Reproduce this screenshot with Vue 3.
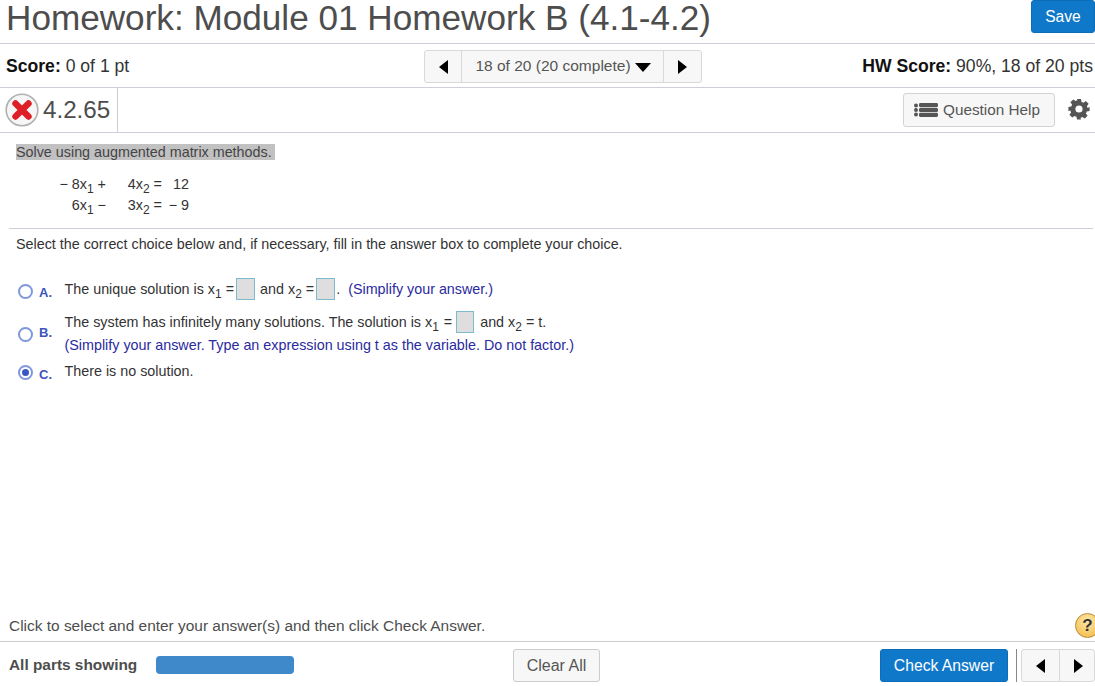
<script setup>
const eqs = [
  ['− 8x', '1', ' +', '4x', '2', ' =', '12'],
  ['6x', '1', ' −', '3x', '2', ' =', '− 9'],
]
</script>

<template>
  <div class="page">
    <header class="title-row">
      <h1 class="title">Homework: Module 01 Homework B (4.1-4.2)</h1>
      <button class="btn primary save">Save</button>
    </header>

    <div class="score-row">
      <div class="score"><b>Score:</b> 0 of 1 pt</div>
      <div class="pager">
        <span class="pager-arrow"><i class="tri left"></i></span>
        <span class="pager-mid">18 of 20 (20 complete)<i class="tri down"></i></span>
        <span class="pager-arrow last"><i class="tri right"></i></span>
      </div>
      <div class="score hw"><b>HW Score:</b> 90%, 18 of 20 pts</div>
    </div>

    <div class="q-row">
      <div class="q-id">
        <svg class="x-icon" width="34" height="34" viewBox="0 0 34 34">
          <circle cx="17" cy="17" r="15.8" fill="#f6f6f6" stroke="#b0b0b0" stroke-width="1.6" />
          <path d="M10.5 10.5 L23.5 23.5 M23.5 10.5 L10.5 23.5" stroke="#df1f26" stroke-width="6.4" stroke-linecap="round" />
        </svg>
        <span class="q-num">4.2.65</span>
      </div>
      <div class="q-tools">
        <button class="help">
          <svg width="24" height="14" viewBox="0 0 24 14" fill="#555">
            <circle cx="2" cy="2.4" r="2" /><circle cx="2" cy="7" r="2" /><circle cx="2" cy="11.6" r="2" />
            <rect x="5" y="0" width="19" height="4.2" rx="1.4" /><rect x="5" y="4.9" width="19" height="4.2" rx="1.4" /><rect x="5" y="9.8" width="19" height="4.2" rx="1.4" />
          </svg>
          Question Help
        </button>
        <svg class="gear" width="22" height="22" viewBox="0 0 22 22" fill="#555">
          <path fill-rule="evenodd" d="M9 1 h4 l.5 2.9 a7.4 7.4 0 0 1 1.9.8 l2.4-1.7 2.8 2.8-1.7 2.4 a7.4 7.4 0 0 1 .8 1.9 L21.6 9 v4 l-2.9.5 a7.4 7.4 0 0 1-.8 1.9 l1.7 2.4-2.8 2.8-2.4-1.7 a7.4 7.4 0 0 1-1.9.8 L13 21.6 H9 l-.5-2.9 a7.4 7.4 0 0 1-1.9-.8 l-2.4 1.7-2.8-2.8 1.7-2.4 a7.4 7.4 0 0 1-.8-1.9 L.4 13 V9 l2.9-.5 a7.4 7.4 0 0 1 .8-1.9 L2.4 4.2 5.2 1.4 l2.4 1.7 a7.4 7.4 0 0 1 1.9-.8 Z M11 7.4 a3.6 3.6 0 1 0 0 7.2 a3.6 3.6 0 0 0 0-7.2 Z" />
        </svg>
      </div>
    </div>

    <main class="content">
      <div class="question">
        <div class="prompt"><span class="hl">Solve using augmented matrix methods.</span></div>
        <div class="eqs">
          <template v-for="(e, i) in eqs" :key="i">
            <span class="c1">{{ e[0] }}<sub>{{ e[1] }}</sub>{{ e[2] }}</span>
            <span class="c2">{{ e[3] }}<sub>{{ e[4] }}</sub>{{ e[5] }}</span>
            <span class="c3">{{ e[6] }}</span>
          </template>
        </div>
      </div>
      <div class="answer">
        <p class="instr">Select the correct choice below and, if necessary, fill in the answer box to complete your choice.</p>

        <div class="opt opt-a">
          <span class="radio"></span><span class="letter">A.</span>
          <div class="opt-text">
            <div>The unique solution is x<sub>1</sub> = <span class="box"></span> and x<sub>2</sub> = <span class="box"></span>. <span class="hint first">(Simplify your answer.)</span></div>
          </div>
        </div>
        <div class="opt opt-b">
          <span class="radio"></span><span class="letter">B.</span>
          <div class="opt-text">
            <div>The system has infinitely many solutions. The solution is x<sub class="wide">1</sub> = <span class="box narrow"></span> and x<sub>2</sub> = t.</div>
            <div class="hint second">(Simplify your answer. Type an expression using t as the variable. Do not factor.)</div>
          </div>
        </div>
        <div class="opt opt-c">
          <span class="radio on"></span><span class="letter">C.</span>
          <div class="opt-text"><div>There is no solution.</div></div>
        </div>
      </div>
    </main>

    <div class="status">
      <span>Click to select and enter your answer(s) and then click Check Answer.</span>
      <span class="qmark">?</span>
    </div>

    <footer class="foot">
      <div class="parts">
        <b>All parts showing</b>
        <span class="bar"></span>
      </div>
      <button class="btn clear">Clear All</button>
      <div class="foot-right">
        <button class="btn primary check">Check Answer</button>
        <span class="sep"></span>
        <div class="mini">
          <span><i class="tri left"></i></span>
          <span><i class="tri right"></i></span>
        </div>
      </div>
    </footer>
  </div>
</template>

<style>
html, body { margin: 0; background: #fff; overflow: hidden; }
</style>

<style scoped>
.page { width: 1095px; height: 686px; overflow: hidden; display: flex; flex-direction: column; font-family: "Liberation Sans", Arial, sans-serif; color: #333; background: #fff; }
.title-row { height: 43px; flex: none; box-sizing: content-box; display: flex; justify-content: space-between; align-items: flex-start; border-bottom: 1px solid #ccced8; padding-left: 6px; }
.title { margin: 0; font-size: 35.15px; line-height: 36px; font-weight: 400; color: #4d4d4d; white-space: nowrap; }
.btn { font-family: inherit; box-sizing: border-box; border-radius: 3px; cursor: pointer; }
.primary { background: #0f78c9; border: 1px solid #0c6db8; color: #fff; }
.save { width: 64px; height: 33px; margin-top: 0; font-size: 15.6px; font-weight: 400; padding: 0; }
.score-row { height: 43px; box-sizing: border-box; flex: none; display: flex; align-items: center; justify-content: space-between; padding: 1px 2px 0 6px; position: relative; font-size: 17.6px; }
.score { color: #333; white-space: nowrap; }
.score b { color: #111; }
.pager { position: absolute; left: 424px; top: 6px; height: 33px; width: 278px; box-sizing: border-box; border: 1px solid #d9d9d9; border-radius: 3px; background: #f7f7f7; display: flex; }
.pager-arrow { width: 36px; flex: none; display: flex; align-items: center; justify-content: center; }
.pager-arrow.last { width: 37px; }
.pager-mid { flex: 1; border-left: 1px solid #d9d9d9; border-right: 1px solid #d9d9d9; display: flex; align-items: center; justify-content: center; font-size: 15.5px; color: #555; white-space: nowrap; padding-bottom: 1px; box-sizing: border-box; }
.tri { display: block; width: 0; height: 0; border-style: solid; border-color: transparent; }
.tri.left { border-width: 7px 9px 7px 0; border-right-color: #000; }
.tri.right { border-width: 7px 0 7px 9px; border-left-color: #000; }
.tri.down { border-width: 9px 8px 0; border-top-color: #000; margin-left: 4px; margin-right: -1px; margin-top: 2px; }
.q-row { height: 46px; box-sizing: border-box; flex: none; display: flex; justify-content: space-between; border-top: 1px solid #ccced8; border-bottom: 1px solid #ccced8; }
.q-id { display: flex; align-items: center; width: 112px; height: 44px; border-right: 1px solid #ccced8; padding-left: 5px; box-sizing: content-box; gap: 4px; }
.x-icon { flex: none; }
.q-num { font-size: 24.2px; color: #4d4d4d; }
.q-tools { display: flex; align-items: flex-start; padding: 5px 5px 0 0; }
.help { width: 152px; height: 34px; box-sizing: border-box; border: 1px solid #d3d3d3; border-radius: 3px; background: #f7f7f7; color: #555; font-family: inherit; font-size: 15.3px; display: flex; align-items: center; gap: 5px; padding: 0 0 0 10px; margin-right: 13px; }
.gear { margin-top: 5px; }
.content { flex: 1; min-height: 0; padding: 0 2px 0 9px; font-size: 14.33px; color: #333; }
.question { padding: 11px 0 0 7px; border-bottom: 1px solid #ccced8; box-sizing: border-box; height: 96px; }
.prompt { line-height: 16px; }
.hl { background: #c1c1c1; padding-right: 3px; color: #444; }
.eqs { display: grid; grid-template-columns: 90px 56px 27px; grid-auto-rows: 21px; margin-top: 16px; width: max-content; }
.c1 { text-align: right; white-space: nowrap; }
.c2 { text-align: right; white-space: nowrap; }
.c3 { text-align: right; white-space: nowrap; }
sub { font-size: 12px; line-height: 0; vertical-align: -4px; }
sub.wide { margin-right: 1px; }
.answer { padding-left: 7px; }
.instr { margin: 0; padding-top: 7px; line-height: 16px; }
.opt { display: flex; position: relative; align-items: flex-start; }
.opt-a { margin-top: 26px; height: 33px; }
.opt-b { height: 49px; }
.opt-c { height: 20px; }
.radio { position: absolute; left: 2px; width: 15px; height: 15px; box-sizing: border-box; border: 2px solid #7f98dd; border-radius: 50%; background: #fff; }
.opt-a .radio { top: 6px; }
.opt-b .radio { top: 16px; }
.opt-c .radio { top: 5px; }
.radio.on::after { content: ""; position: absolute; left: 2px; top: 2px; width: 7px; height: 7px; border-radius: 50%; background: #3a57c4; }
.letter { position: absolute; left: 23px; font-weight: 700; font-size: 13px; color: #3d55bd; }
.opt-a .letter { top: 7px; }
.opt-b .letter { top: 14px; }
.opt-c .letter { top: 7px; }
.opt-text { margin-left: 48.5px; line-height: 23px; white-space: nowrap; }
.hint { color: #2a2aa0; }
.hint.first { margin-left: 4px; }
.box { display: inline-block; vertical-align: -6px; width: 19px; height: 22px; box-sizing: border-box; border: 1px solid #7fbad0; background: #dedede; margin: 0 1px 0 -2px; }
.box.narrow { width: 18px; margin: 0 2px 0 0; }
.status { flex: none; display: flex; justify-content: space-between; align-items: center; padding: 0 0 2px 9px; box-sizing: border-box; border-bottom: 1px solid #ccc; font-size: 15.45px; color: #4d4d4d; position: relative; height: 30px; }
.qmark { position: absolute; left: 1075px; top: 1px; width: 25px; height: 25px; box-sizing: border-box; border-radius: 50%; background: radial-gradient(circle at 50% 30%, #fde9a8, #f2b642); border: 1px solid #b98a35; color: #333; font-weight: 700; font-size: 17px; line-height: 23px; text-align: center; }
.foot { height: 44px; flex: none; display: flex; align-items: center; justify-content: space-between; padding: 0 0 0 9px; position: relative; }
.parts { display: flex; align-items: center; gap: 19px; font-size: 15.4px; color: #4d4d4d; margin-top: 2px; }
.bar { width: 138px; height: 18px; border-radius: 4px; background: #3f88c9; }
.clear { position: absolute; left: 513px; top: 7px; width: 87px; height: 33px; border: 1px solid #ccc; background: #f7f7f7; color: #555; font-size: 16px; padding: 0; }
.foot-right { display: flex; align-items: center; margin-top: 3px; }
.check { width: 128px; height: 33px; font-size: 15.7px; padding: 0; font-weight: 400; }
.sep { width: 1px; height: 33px; background: #888; margin: 0 4px 0 8px; }
.mini { width: 74px; height: 33px; box-sizing: border-box; border: 1px solid #d9d9d9; border-radius: 3px; background: #f7f7f7; display: flex; }
.mini span { flex: none; width: 37px; display: flex; align-items: center; justify-content: center; }
.mini span:first-child { border-right: 1px solid #d9d9d9; }
</style>
